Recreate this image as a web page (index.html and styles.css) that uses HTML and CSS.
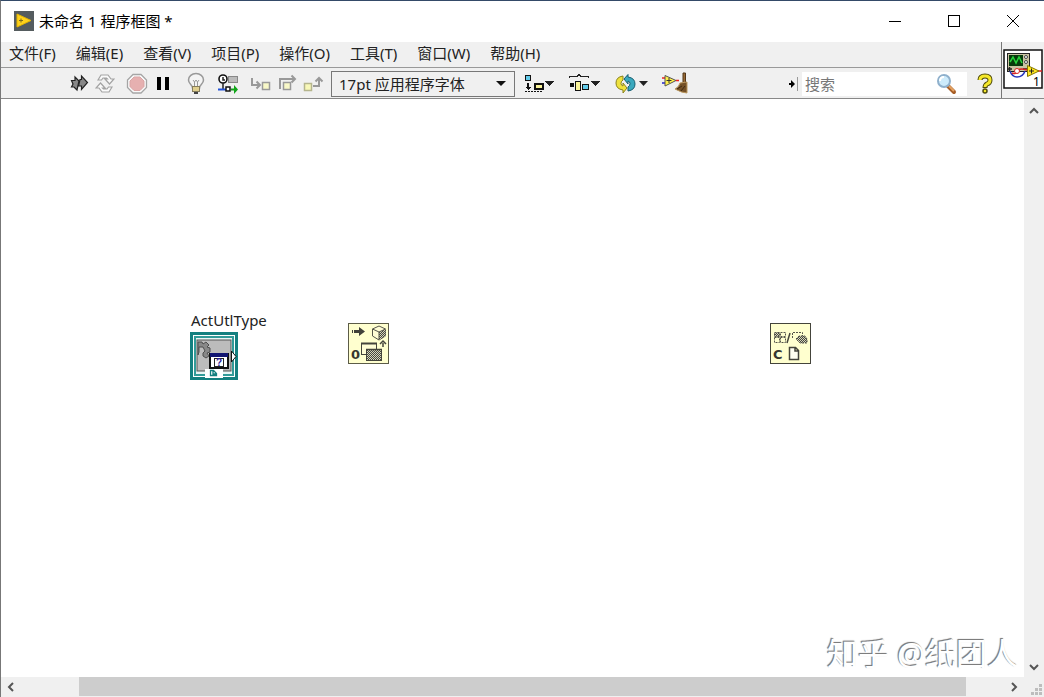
FILE: index.html
```
<!DOCTYPE html>
<html lang="zh-CN">

<head>
    <meta charset="UTF-8">
    <meta name="viewport" content="width=device-width, initial-scale=1.0">
    <title>未命名 1 程序框图 *</title>
    <link rel="stylesheet" href="styles.css">
</head>

<body>
    <div class="window">

        <header class="titlebar">
            <svg class="app-icon" width="20" height="20" viewBox="0 0 20 20">
                <rect width="20" height="20" fill="#555c5f" />
                <path d="M3 3 17 9.500 3 16Z" fill="#ffd21c" stroke="#e5b500" stroke-width="1" />
                <path d="M5 9.500h4M7 7.500v4" stroke="#7b6a20" />
            </svg>
            <h1 class="title">未命名 1 程序框图 *</h1>
            <div class="win-buttons">
                <button type="button" aria-label="最小化">
                    <svg width="14" height="14"><path d="M1 7.500h12" stroke="#000" /></svg>
                </button>
                <button type="button" aria-label="最大化">
                    <svg width="14" height="14"><rect x="1.500" y="1.500" width="11" height="11" fill="none" stroke="#000" /></svg>
                </button>
                <button type="button" aria-label="关闭">
                    <svg width="14" height="14"><path d="M1 1 13 13M13 1 1 13" stroke="#000" /></svg>
                </button>
            </div>
        </header>

        <div class="bars">
            <div class="bars-main">
                <nav class="menu">
                    <button type="button">文件(F)</button>
                    <button type="button">编辑(E)</button>
                    <button type="button">查看(V)</button>
                    <button type="button">项目(P)</button>
                    <button type="button">操作(O)</button>
                    <button type="button">工具(T)</button>
                    <button type="button">窗口(W)</button>
                    <button type="button">帮助(H)</button>
                </nav>

                <div class="toolbar">
                    <div class="tools">
                        <button type="button" aria-label="运行">
                            <svg width="20" height="24" viewBox="0 0 20 24" fill="#888" stroke="#222" stroke-width="1.200">
                                <path d="M2.500 8.500H6V5l4 4-2 9-3-3H2.500l1.500-3Z" />
                                <path d="M11 7.500h1.500V4l6 6.500-6 7V14H9.500Z" />
                            </svg>
                        </button>
                        <button type="button" aria-label="连续运行">
                            <svg width="20" height="24" viewBox="0 0 20 24" fill="#fafafa" stroke="#a3a3a3" stroke-width="1.200">
                                <path id="loop" d="M3 8 6 3h7l3 4h3l-4.500 5L10 7h2.500l-1-1H8L6.500 8Z" />
                                <path d="M17 15l-3 5H7l-3-4H1l4.500-5L10 16H7.500l1 1H12l1.500-2Z" />
                            </svg>
                        </button>
                    </div>

                    <div class="tools spaced">
                        <button type="button" aria-label="中止执行">
                            <svg width="22" height="24" viewBox="0 0 22 24">
                                <path d="M7 2.500h8l5.500 5.500v7.500l-5.500 5.500H7L1.500 15.500v-7.500Z" fill="#fafafa" stroke="#a5a5a5" stroke-width="1.300" />
                                <path d="M8 5h6l4 4v5.500l-4 4H8l-4-4V9Z" fill="#e6b0b0" stroke="#d9a5a5" />
                            </svg>
                        </button>
                        <button type="button" aria-label="暂停">
                            <svg width="18" height="24" viewBox="0 0 18 24">
                                <path d="M3 5h4v13H3ZM11 5h4v13h-4Z" />
                            </svg>
                        </button>
                    </div>

                    <div class="tools spaced-wide">
                        <button type="button" aria-label="高亮显示执行过程">
                            <svg width="20" height="24" viewBox="0 0 20 24">
                                <path d="M6.500 16c0-3-4-4-4-8a7.500 6.500 0 0 1 15 0c0 4-4 5-4 8Z" fill="#f4f4f4" stroke="#999" stroke-width="1.500" />
                                <path d="M7 8l1.500 2L10 8l1.500 2L13 8M8.500 10v6M11.500 10v6" fill="none" stroke="#999" />
                                <rect x="6.500" y="14.500" width="7" height="5" fill="#e0cf8e" stroke="#857c5c" />
                                <path d="M8 21h4" stroke="#444" stroke-width="2" />
                            </svg>
                        </button>
                    </div>

                    <div class="tools spaced">
                        <button type="button" aria-label="保存连线值">
                            <svg width="26" height="24" viewBox="0 0 26 24">
                                <circle cx="6" cy="7" r="4" fill="#fff" stroke="#111" stroke-width="1.600" />
                                <path d="M6 5v3h2M6 11v6" fill="none" stroke="#222" stroke-width="1.500" />
                                <rect x="11.500" y="4.500" width="9" height="6" fill="#bbb" stroke="#888" />
                                <path d="M1 17.500h9" stroke="#2454d8" stroke-width="2" />
                                <rect x="9" y="15" width="4" height="4" fill="#fff" stroke="#111" stroke-width="1.500" />
                                <path d="M14 16.500h3V13l4 4.500-4 4.500v-3.500h-3Z" fill="#12a51a" />
                            </svg>
                        </button>
                        <button type="button" aria-label="单步步入">
                            <svg width="22" height="24" viewBox="0 0 22 24">
                                <path d="M3 6v7H10M7.500 9.500l3.500 3.500-3.500 3.500" fill="none" stroke="#999" stroke-width="2" />
                                <rect x="13.500" y="10.500" width="7" height="7" fill="#f8f8c8" stroke="#999" stroke-width="1.500" />
                            </svg>
                        </button>
                        <button type="button" aria-label="单步步过">
                            <svg width="20" height="24" viewBox="0 0 20 24">
                                <path d="M3 17V7H17M14.500 3.500l3.500 3.500-3.500 3.500" fill="none" stroke="#999" stroke-width="2" />
                                <rect x="6.500" y="10.500" width="7" height="7" fill="#f8f8c8" stroke="#999" stroke-width="1.500" />
                            </svg>
                        </button>
                        <button type="button" aria-label="单步步出">
                            <svg width="22" height="24" viewBox="0 0 22 24">
                                <rect x="1.500" y="11.500" width="7" height="7" fill="#f8f8b8" stroke="#b5b58d" stroke-width="1.500" />
                                <path d="M10 14h6V6M12.500 9.500 16 6l3.500 3.500" fill="none" stroke="#999" stroke-width="2" />
                            </svg>
                        </button>
                    </div>

                    <div class="font-box">
                        <select aria-label="文本设置">
                            <option>17pt 应用程序字体</option>
                        </select>
                        <svg class="font-arrow" width="10" height="6" viewBox="0 0 10 6"><path d="M0 0h10L5 5Z" fill="#111" /></svg>
                    </div>

                    <div class="tools layout-tools">
                        <button type="button" aria-label="对齐对象">
                            <svg width="34" height="24" viewBox="0 0 34 24" shape-rendering="crispEdges">
                                <rect x="4.500" y="3.500" width="5" height="5" fill="#62cbea" stroke="#111" />
                                <path d="M6 11h2v4h2l-3 3-3-3h2Z" fill="#111" />
                                <path d="M4 19.500h18" stroke="#111" stroke-dasharray="2 1" />
                                <rect x="14" y="12" width="8" height="5" fill="#fbf59a" stroke="#111" stroke-width="1.500" />
                                <path d="M24 9h9l-4.500 5Z" fill="#222" />
                            </svg>
                        </button>
                        <button type="button" aria-label="分布对象">
                            <svg width="34" height="24" viewBox="0 0 34 24" shape-rendering="crispEdges">
                                <path d="M2 6V4.500h8l2-2 2 2h7V6" fill="none" stroke="#222" />
                                <rect x="3" y="11" width="4" height="4" fill="#111" />
                                <rect x="8.500" y="9.500" width="5" height="9" fill="#fbf59a" stroke="#111" />
                                <rect x="15.500" y="12.500" width="6" height="5" fill="#62cbea" stroke="#111" />
                                <path d="M24 9h9l-4.500 5Z" fill="#222" />
                            </svg>
                        </button>
                        <button type="button" aria-label="重新排序">
                            <svg width="36" height="24" viewBox="0 0 36 24">
                                <path d="M10 4v4q-2 1-2 3.500 0 2 2 2.500v-3l4 5-4 5v-3q-7-1-7-7t7-7Z" fill="#eee13e" stroke="#8b831c" />
                                <path d="M15 19v-4q2-1 2-3.500 0-2-2-2.500v3l-4-5 4-4.500v2.500q7 1 7 7t-7 7Z" fill="#3ba9be" stroke="#175f72" />
                                <path d="M26 9h9l-4.500 5Z" fill="#222" />
                            </svg>
                        </button>
                        <button type="button" aria-label="整理程序框图">
                            <svg width="30" height="24" viewBox="0 0 30 24">
                                <path d="M1 6h3" stroke="#e22" stroke-width="1.500" />
                                <path d="M1 11h3" stroke="#22c" stroke-width="1.500" />
                                <path d="M4 3.500 15 8.500 4 14Z" fill="#fff04a" stroke="#555" />
                                <path d="M5.500 8.500h5M8 6v5" stroke="#333" />
                                <path d="M15 8.500h3" stroke="#e22" stroke-width="1.500" />
                                <path d="M22 1h2.500v10H22Z" fill="#996a36" stroke="#513619" />
                                <path d="M19 11l7-1v11q-5 0-12-4 4-2 5-6Z" fill="#755127" stroke="#bb985f" />
                                <path d="M16 17l5-3M20 19l4-5" stroke="#3f2a13" />
                            </svg>
                        </button>
                    </div>

                    <div class="search">
                        <button type="button" class="search-toggle" aria-label="展开搜索">
                            <svg width="9" height="14" viewBox="0 0 9 14"><path d="M0 6h2V3l4 4-4 4V8H0Z" /><path d="M8.500 0v14" stroke="#999" /></svg>
                        </button>
                        <label class="search-box">
                            <input type="text" placeholder="搜索" aria-label="搜索">
                            <svg width="22" height="22" viewBox="0 0 22 22">
                                <path d="M12 13 18 19" stroke="#a65d25" stroke-width="4" stroke-linecap="round" />
                                <path d="M13 13 18 18" stroke="#e4a263" stroke-width="2" />
                                <circle cx="8" cy="8" r="6" fill="#cdebfb" stroke="#8fb0cc" stroke-width="2" />
                                <path d="M4 8q0-4 4-4" fill="none" stroke="#fff" stroke-width="2" />
                            </svg>
                        </label>
                        <button type="button" class="help" aria-label="显示即时帮助">
                            <svg width="16" height="22" viewBox="0 0 16 22">
                                <path d="M3 7q0-4 5-4t5 4q0 3-3 4-2 1-2 4" fill="none" stroke="#514d0d" stroke-width="5" />
                                <path d="M3 7q0-4 5-4t5 4q0 3-3 4-2 1-2 3" fill="none" stroke="#f5e82b" stroke-width="3" />
                                <circle cx="8" cy="18" r="2" fill="#f5e82b" stroke="#514d0d" stroke-width="1.500" />
                            </svg>
                        </button>
                    </div>
                </div>
            </div>

            <div class="vi-panel">
                <svg width="40" height="40" viewBox="0 0 40 40">
                    <rect x="1" y="1" width="38" height="38" fill="#fff" stroke="#111" stroke-width="1.500" />
                    <rect x="4.500" y="4.500" width="22" height="18" fill="#c9c3a2" stroke="#222" />
                    <rect x="6" y="6" width="14" height="11" fill="#063b0b" />
                    <path d="M7 13l3-5 3 6 3-6 3 6" fill="none" stroke="#27d43b" stroke-width="1.500" />
                    <circle cx="23" cy="8" r="1.500" fill="#fff" stroke="#444" />
                    <circle cx="23" cy="13" r="1.500" fill="#fff" stroke="#444" />
                    <path d="M4 20h5M6.500 18v5M20 20h5" stroke="#222" stroke-width="1.500" />
                    <path d="M7 22q2 6 7 6 6 0 8-6" fill="none" stroke="#2735bd" stroke-width="1.500" />
                    <path d="M9 24q4 2 6-3 3-2 9 0M34 22h5" fill="none" stroke="#d92222" stroke-width="1.500" />
                    <circle cx="14" cy="22" r="2.500" fill="#fff" stroke="#d92222" />
                    <path d="M24.500 16.500 36 22 24.500 27.500Z" fill="#ffe622" stroke="#867900" />
                    <path d="M26 22h5M28.500 19.500v5" stroke="#222" />
                    <text x="30" y="37" class="vi-number">1</text>
                </svg>
            </div>
        </div>

        <div class="workspace">
            <main class="canvas">
                <div class="node node-type">
                    <span>ActUtlType</span>
                    <svg width="48" height="48" viewBox="0 0 48 48">
                        <rect x="1.500" y="1.500" width="45" height="45" fill="#fff" stroke="#148080" stroke-width="3" />
                        <rect x="5" y="5" width="38" height="38" fill="#e9f6f5" stroke="#329b99" stroke-width="2" />
                        <rect x="7" y="8" width="34" height="31" fill="#bcbcbc" stroke="#555" />
                        <path d="M8 10h4l1 2 3-2 3 3-2 2 3 1v4l-3 1 2 3-3 2-3-2v-3l2-2-2-4H9v5l-1 3Z" fill="#888" stroke="#4f4f4f" />
                        <rect x="20" y="22" width="18" height="14" fill="#fff" stroke="#111" stroke-width="2" />
                        <path d="M20 23h18" stroke="#111572" stroke-width="4" />
                        <rect x="24.500" y="26.500" width="9" height="8" fill="#fff" stroke="#222" />
                        <text x="26" y="34" class="query-mark">?</text>
                        <path d="M41.500 19 46 24.500 41.500 30Z" fill="#fff" stroke="#111" />
                        <rect x="15" y="37" width="18" height="9" fill="#fff" />
                        <path d="M20.500 38.500h3l3 3v2h-6ZM23 38v4h3" fill="#fff" stroke="#148080" stroke-width="1.300" />
                    </svg>
                </div>

                <div class="node node-open">
                    <svg width="41" height="41" viewBox="0 0 41 41">
                        <defs>
                            <pattern id="dots" width="2" height="2" patternUnits="userSpaceOnUse">
                                <rect width="2" height="2" fill="#d9d8b5" />
                                <path d="M0 0h1v1H0ZM1 1h1v1H1Z" fill="#444" />
                            </pattern>
                        </defs>
                        <rect x=".5" y=".5" width="40" height="40" fill="#ffffcf" stroke="#5c5c47" />
                        <path d="M4 7h1v3H4ZM6 7h5V4l6 4.500-6 4.500v-3H6Z" fill="#41413a" />
                        <path d="M24.500 6 31 3l6.500 3v7L31 17l-6.500-4Z" fill="#fffdd5" stroke="#55554a" />
                        <path d="M31 9l6.500-3v7L31 17Z" fill="url(#dots)" />
                        <path d="M24.500 6 31 9v8M31 9l6.500-3" fill="none" stroke="#55554a" />
                        <rect x="13.500" y="20.500" width="15" height="11" fill="#fffdd5" stroke="#44443b" />
                        <path d="M13 20.500h16" stroke="#44443b" stroke-width="2" />
                        <rect x="18.500" y="26.500" width="15" height="11" fill="url(#dots)" stroke="#44443b" />
                        <path d="M18 26.500h16M35 24v-4M32 21l3-3 3 3" fill="none" stroke="#44443b" stroke-width="1.500" />
                        <text x="3" y="36" class="node-letter">0</text>
                    </svg>
                </div>

                <div class="node node-close">
                    <svg width="41" height="41" viewBox="0 0 41 41">
                        <rect x=".5" y=".5" width="40" height="40" fill="#ffffcf" stroke="#44443b" />
                        <g fill="none" stroke="#55554a" stroke-dasharray="2 1">
                            <rect x="4.500" y="9.500" width="5" height="4" fill="url(#dots)" />
                            <rect x="10.500" y="9.500" width="5" height="4" />
                            <rect x="4.500" y="14.500" width="5" height="5" />
                            <rect x="10.500" y="14.500" width="5" height="5" />
                            <path d="M22.500 15V9.500h10V13" />
                            <path d="M26 16l3-3h6l2 3v4h-7Z" fill="url(#dots)" />
                        </g>
                        <path d="M17 20l3-10" stroke="#44443b" stroke-width="1.500" />
                        <path d="M19.500 24.500h6l3 3v9h-9ZM25 24v4h4" fill="#fffff0" stroke="#44443b" stroke-width="1.500" />
                        <text x="3" y="36" class="node-letter">C</text>
                    </svg>
                </div>

                <p class="watermark">知乎 @纸团人</p>
            </main>

            <div class="scroll scroll-y">
                <button type="button" aria-label="向上滚动">
                    <svg width="10" height="8"><path d="M1 6l4-4 4 4" /></svg>
                </button>
                <button type="button" aria-label="向下滚动">
                    <svg width="10" height="8"><path d="M1 2l4 4 4-4" /></svg>
                </button>
            </div>

            <div class="scroll scroll-x">
                <button type="button" aria-label="向左滚动">
                    <svg width="8" height="10"><path d="M6 1 2 5l4 4" /></svg>
                </button>
                <div class="track"><div class="thumb"></div></div>
                <button type="button" aria-label="向右滚动">
                    <svg width="8" height="10"><path d="M2 1l4 4-4 4" /></svg>
                </button>
            </div>

            <div class="grip">
                <svg width="11" height="11" viewBox="0 0 11 11" fill="#bdbdbd">
                    <path d="M8 0h3v3H8ZM4 4h3v3H4ZM8 4h3v3H8ZM0 8h3v3H0ZM4 8h3v3H4ZM8 8h3v3H8Z" />
                </svg>
            </div>
        </div>
    </div>
</body>

</html>
```
FILE: styles.css
```
* {
    box-sizing: border-box;
}

body {
    margin: 0;
    font-family: "Noto Sans", "Noto Sans CJK SC", sans-serif;
    font-size: 15px;
    line-height: 20px;
    color: #222;
}

button {
    padding: 0;
    border: 0;
    background: none;
    font: inherit;
    color: inherit;
}

svg {
    display: block;
    flex: none;
}

.window {
    display: flex;
    flex-direction: column;
    height: 100vh;
    border-top: 1px solid #344a68;
    border-left: 1px solid #777;
    background: #f0f0f0;
}

/* title bar */
.titlebar {
    display: flex;
    align-items: center;
    height: 41px;
    padding: 0 2px 2px 13px;
    background: #fff;
}

.title {
    flex: 1;
    margin: 0 0 0 5px;
    font-size: 15px;
    font-weight: normal;
    color: #000;
}

.win-buttons {
    display: flex;
}

.win-buttons button {
    display: flex;
    align-items: center;
    justify-content: center;
    width: 59px;
    height: 39px;
}

/* menu and toolbar */
.bars {
    display: flex;
    border-bottom: 1px solid #888;
}

.bars-main {
    flex: 1;
    min-width: 0;
}

.menu {
    display: flex;
    gap: 20px;
    height: 26px;
    padding: 0 8px 4px;
    border-bottom: 1px solid #999;
}

.toolbar {
    display: flex;
    align-items: center;
    gap: 6px;
    height: 30px;
    padding: 1px 8px 0 68px;
}

.tools {
    display: flex;
    align-items: center;
    gap: 6px;
}

.spaced {
    margin-left: 5px;
}

.spaced-wide {
    margin-left: 8px;
}

.font-box {
    display: grid;
    align-items: center;
    width: 184px;
}

.font-box > * {
    grid-area: 1 / 1;
}

.font-box select {
    appearance: none;
    width: 100%;
    height: 26px;
    padding: 0 24px 0 7px;
    border: 1px solid #777;
    border-radius: 0;
    background: #f0f0f0;
    font: inherit;
    color: #222;
}

.font-arrow {
    justify-self: end;
    margin-right: 9px;
    pointer-events: none;
}

.layout-tools {
    gap: 12px;
}

.search {
    display: flex;
    align-items: center;
    margin-left: auto;
}

.search-box {
    display: flex;
    align-items: center;
    width: 165px;
    height: 24px;
    margin: 0 10px 0 4px;
    padding: 0 9px 0 3px;
    background: #fff;
}

.search-box input {
    flex: 1;
    min-width: 0;
    padding: 0;
    border: 0;
    outline: 0;
    background: none;
    font: inherit;
}

.search-box input::placeholder {
    color: #777;
}

.vi-panel {
    display: flex;
    align-items: center;
    width: 43px;
    padding: 0 0 2px 1px;
    border-left: 1px solid #777;
}

.vi-number {
    font: 12px "Noto Sans", sans-serif;
}

/* diagram */
.workspace {
    display: grid;
    flex: 1;
    grid-template-columns: 1fr 20px;
    grid-template-rows: 1fr 20px;
    min-height: 0;
}

.canvas {
    position: relative;
    overflow: hidden;
    background: #fff;
}

.node {
    position: absolute;
}

.node-type {
    left: 189px;
    top: 211px;
}

.node-type span {
    display: block;
    padding-left: 1px;
    margin-bottom: 2px;
}

.node-open {
    left: 347px;
    top: 224px;
}

.node-close {
    left: 769px;
    top: 224px;
}

.query-mark {
    font: bold 10px "Liberation Sans", sans-serif;
    fill: #2b1b9a;
}

.node-letter {
    font: bold 13px "DejaVu Sans", sans-serif;
    fill: #37372f;
}

.watermark {
    position: absolute;
    right: 6px;
    bottom: 4px;
    margin: 0;
    font-size: 31px;
    line-height: 40px;
    color: #fff;
    text-shadow: -1px -1px 1px #777, -1px -1px 0 #bbb;
}

/* scroll bars */
.scroll {
    display: flex;
}

.scroll button {
    display: flex;
    align-items: center;
    justify-content: center;
    width: 20px;
    height: 20px;
}

.scroll path {
    fill: none;
    stroke: #555;
    stroke-width: 2;
}

.scroll-y {
    flex-direction: column;
    justify-content: space-between;
    padding-top: 2px;
}

.track {
    flex: 1;
    padding: 0 38px 0 58px;
}

.thumb {
    height: 19px;
    background: #cdcdcd;
}

.grip {
    display: flex;
    align-items: flex-end;
    justify-content: flex-end;
    padding: 2px;
}
```
